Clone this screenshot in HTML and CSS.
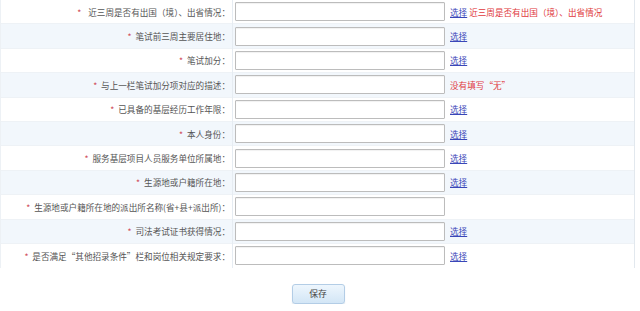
FILE: index.html
```html
<!DOCTYPE html>
<html lang="zh-CN">
<head>
<meta charset="utf-8">
<title>报名信息</title>
<link rel="stylesheet" href="styles.css">
</head>
<body>
<div class="page">
  <table class="form">
    <tr>
      <td class="label"><span class="star star-wide">*</span> 近三周是否有出国（境）、出省情况：</td>
      <td class="field"><input class="text" type="text"></td>
      <td class="extra"><a class="pick" href="#">选择</a> <span class="warn">近三周是否有出国（境）、出省情况</span></td>
    </tr>
    <tr class="alt">
      <td class="label"><span class="star">*</span> 笔试前三周主要居住地：</td>
      <td class="field"><input class="text" type="text"></td>
      <td class="extra"><a class="pick" href="#">选择</a></td>
    </tr>
    <tr>
      <td class="label"><span class="star">*</span> 笔试加分：</td>
      <td class="field"><input class="text" type="text"></td>
      <td class="extra"><a class="pick" href="#">选择</a></td>
    </tr>
    <tr class="alt">
      <td class="label"><span class="star">*</span> 与上一栏笔试加分项对应的描述：</td>
      <td class="field"><input class="text" type="text"></td>
      <td class="extra"><span class="warn">没有填写“无”</span></td>
    </tr>
    <tr>
      <td class="label"><span class="star">*</span> 已具备的基层经历工作年限：</td>
      <td class="field"><input class="text" type="text"></td>
      <td class="extra"><a class="pick" href="#">选择</a></td>
    </tr>
    <tr class="alt">
      <td class="label"><span class="star">*</span> 本人身份：</td>
      <td class="field"><input class="text" type="text"></td>
      <td class="extra"><a class="pick" href="#">选择</a></td>
    </tr>
    <tr>
      <td class="label"><span class="star">*</span> 服务基层项目人员服务单位所属地：</td>
      <td class="field"><input class="text" type="text"></td>
      <td class="extra"><a class="pick" href="#">选择</a></td>
    </tr>
    <tr class="alt">
      <td class="label"><span class="star">*</span> 生源地或户籍所在地：</td>
      <td class="field"><input class="text" type="text"></td>
      <td class="extra"><a class="pick" href="#">选择</a></td>
    </tr>
    <tr>
      <td class="label"><span class="star">*</span> 生源地或户籍所在地的派出所名称(省+县+派出所)：</td>
      <td class="field"><input class="text" type="text"></td>
      <td class="extra"></td>
    </tr>
    <tr class="alt">
      <td class="label"><span class="star">*</span> 司法考试证书获得情况：</td>
      <td class="field"><input class="text" type="text"></td>
      <td class="extra"><a class="pick" href="#">选择</a></td>
    </tr>
    <tr>
      <td class="label"><span class="star">*</span> 是否满足“其他招录条件”栏和岗位相关规定要求：</td>
      <td class="field"><input class="text" type="text"></td>
      <td class="extra"><a class="pick" href="#">选择</a></td>
    </tr>
  </table>
  <div class="actions">
    <button class="save" type="button">保存</button>
  </div>
</div>
</body>
</html>
```

FILE: styles.css
```css
html, body {
  margin: 0;
  padding: 0;
  background: #ffffff;
}

body {
  font-family: "Noto Sans CJK SC", "Noto Sans", "Liberation Sans", sans-serif;
  font-size: 8.6px;
  color: #555555;
}

.page {
  width: 635px;
}

.form {
  width: 635px;
  border-collapse: collapse;
  table-layout: fixed;
  margin-top: -1px;
}

.form tr {
  height: 24.4px;
}

.form tr.alt {
  background: #f2f7fc;
}

.form td {
  padding: 0;
  vertical-align: middle;
  border-top: 1px solid #eef2f6;
  white-space: nowrap;
}

.form td.label {
  width: 229px;
  padding-right: 2px;
  text-align: right;
  border-right: 1px solid #e6ecf2;
  border-left: 1px solid #edf1f5;
}

.form td.field {
  width: 212px;
  padding-left: 2px;
}

.form td.extra {
  padding-left: 3px;
  border-right: 1px solid #e2e8ee;
}

.star {
  color: #cf4a58;
  margin-right: 2px;
}

.star-wide {
  margin-right: 5px;
}

.text {
  display: block;
  box-sizing: border-box;
  width: 210px;
  height: 19px;
  margin: 0;
  padding: 0 3px;
  border: 1px solid #bcbcbc;
  border-radius: 1px;
  background: #ffffff;
  box-shadow: inset 0 1px 1px rgba(0, 0, 0, 0.06);
  font: inherit;
}

.pick {
  color: #3a46b8;
  text-decoration: underline;
}

.warn {
  color: #e0383c;
}

.actions {
  display: flex;
  justify-content: center;
  padding-top: 16px;
}

.save {
  width: 53px;
  height: 20px;
  margin-left: 1px;
  padding: 0;
  border: 1px solid #b3cde6;
  border-radius: 3px;
  background: linear-gradient(#eef6fd, #d3e6f6);
  box-shadow: 0 1px 1px rgba(120, 150, 180, 0.25);
  font-family: inherit;
  font-size: 8.8px;
  color: #444444;
}
```
